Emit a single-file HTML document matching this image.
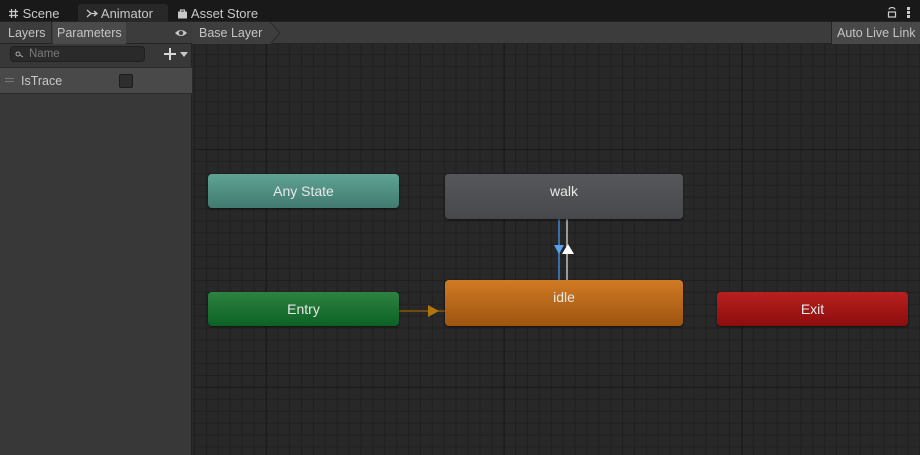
<!DOCTYPE html>
<html><head><meta charset="utf-8"><style>
*{margin:0;padding:0;box-sizing:border-box}
body{width:920px;height:455px;overflow:hidden;background:#282828;font-family:"Liberation Sans",sans-serif;font-size:12px;color:#c4c4c4;position:relative}
.a{position:absolute}
.tabs{left:0;top:0;width:920px;height:22px;background:#191919;border-bottom:1px solid #232323}
.tab{top:5px;height:18px;line-height:18px;font-size:13px;color:#c8c8c8}
.tool{left:0;top:22px;width:920px;height:22px;background:#3c3c3c;border-bottom:1px solid #232323}
.left{left:0;top:44px;width:192px;height:411px;background:#383838;border-right:1px solid #232323}
.graph{left:193px;top:44px;width:727px;height:411px;background-color:#282828;
background-image:
linear-gradient(90deg,#1b1b1b 0 1px,transparent 1px),
linear-gradient(180deg,#1b1b1b 0 1px,transparent 1px),
linear-gradient(90deg,#202020 0 1px,transparent 1px),
linear-gradient(180deg,#202020 0 1px,transparent 1px);
background-size:237.9px 237.9px,237.9px 237.9px,11.895px 11.895px,11.895px 11.895px;
background-position:73px 0,0 105px,1px 0,0 10px}
.node{position:absolute;border-radius:4px;text-align:center;color:#e8e8e8;font-size:14px;box-shadow:0 1px 2px rgba(0,0,0,.6)}
</style></head><body>
<div class="a tabs">
 <div class="a" style="left:78px;top:4px;width:90px;height:18px;background:#282828;border-radius:3px 3px 0 0"></div>
 <div class="a tab" style="left:8px"><svg width="11" height="11" style="vertical-align:-1px" viewBox="0 0 11 11"><path d="M3.5 1v9M7.5 1v9M1 3.5h9M1 7.5h9" stroke="#c8c8c8" stroke-width="1.3" fill="none"/></svg> Scene</div>
 <div class="a tab" style="left:86px"><svg width="12" height="11" style="vertical-align:-1px" viewBox="0 0 12 11"><path d="M1 2l4 3.5L1 9M5 5.5h6M8 3l3 2.5L8 8" stroke="#c8c8c8" stroke-width="1.3" fill="none"/></svg> Animator</div>
 <div class="a tab" style="left:177px"><svg width="11" height="11" style="vertical-align:-1px" viewBox="0 0 11 11"><rect x="1" y="3.5" width="9" height="7" fill="#c8c8c8"/><path d="M3.5 4V2h4v2" stroke="#c8c8c8" stroke-width="1.2" fill="none"/></svg> Asset Store</div>
 <svg class="a" style="left:887px;top:7px" width="10" height="11" viewBox="0 0 10 11"><path d="M2 2.5a3 2 0 0 1 6 0" stroke="#ccc" stroke-width="1.2" fill="none"/><rect x="1.5" y="5" width="7" height="5" stroke="#ccc" stroke-width="1.2" fill="none"/></svg>
 <div class="a" style="left:907px;top:7px;width:3px;height:3px;background:#ccc;box-shadow:0 4px #ccc,0 8px #ccc"></div>
</div>
<div class="a tool">
 <div class="a" style="left:0;top:0;width:52px;height:22px;line-height:23px;padding-left:8px;font-size:12.5px;border-right:1px solid #2a2a2a">Layers</div>
 <div class="a" style="left:53px;top:0;width:73px;height:22px;line-height:23px;padding-left:4px;background:#4a4a4a;font-size:12.5px">Parameters</div>
 <svg class="a" style="left:174px;top:6px" width="14" height="10" viewBox="0 0 14 10"><path d="M1 5Q7-1 13 5Q7 11 1 5z" fill="#c8c8c8"/><circle cx="7" cy="5" r="2.2" fill="#3c3c3c"/></svg>
 <div class="a" style="left:192px;top:0;width:80px;height:22px;line-height:23px;padding-left:7px;background:#3e3e3e;font-size:12.5px">Base Layer</div>
 <svg class="a" style="left:270px;top:0" width="12" height="22"><path d="M0 0L10 11L0 22" stroke="#2a2a2a" fill="#3e3e3e"/></svg>
 <div class="a" style="left:831px;top:0;width:89px;height:22px;line-height:23px;padding-left:5px;background:#484848;border-left:1px solid #262626;font-size:12.5px">Auto Live Link</div>
</div>
<div class="a left">
 <div class="a" style="left:10px;top:2px;width:135px;height:16px;background:#2a2a2a;border:1px solid #202020;border-radius:4px;color:#7a7a7a;font-size:11.5px;line-height:15px;padding-left:18px">Name</div>
 <svg class="a" style="left:15px;top:7px" width="9" height="7"><circle cx="3" cy="3" r="2" stroke="#aaa" fill="none"/><path d="M5 4l3 2" stroke="#aaa"/></svg>
 <div class="a" style="left:164px;top:9px;width:12px;height:2px;background:#d8d8d8"></div>
 <div class="a" style="left:169px;top:4px;width:2px;height:12px;background:#d8d8d8"></div>
 <div class="a" style="left:180px;top:8px;border:4px solid transparent;border-top:5px solid #c8c8c8;border-bottom:0"></div>
 <div class="a" style="left:0;top:23px;width:192px;height:27px;background:#494949;border-bottom:1px solid #2a2a2a;border-top:1px solid #2c2c2c"></div>
 <div class="a" style="left:5px;top:34px;width:9px;height:1px;background:#777;box-shadow:0 3px #777"></div>
 <div class="a" style="left:21px;top:30px;font-size:12.5px;color:#c8c8c8">IsTrace</div>
 <div class="a" style="left:119px;top:30px;width:14px;height:14px;background:#2e2e2e;border:1px solid #1c1c1c;border-radius:2px"></div>
</div>
<div class="a graph"></div>
<div class="a" style="left:558px;top:219px;width:2px;height:61px;background:#3b6ea8"></div>
<div class="a" style="left:566px;top:219px;width:2px;height:61px;background:#9a9a9a"></div>
<div class="a" style="left:554px;top:245px;border:5px solid transparent;border-top:9px solid #5aa0ee;border-bottom:0"></div>
<div class="a" style="left:562px;top:244px;border:6px solid transparent;border-bottom:10px solid #fff;border-top:0"></div>
<div class="a" style="left:399px;top:310px;width:46px;height:2px;background:#6e4a0e"></div>
<div class="a" style="left:428px;top:305px;border:6px solid transparent;border-left:11px solid #b07410;border-right:0"></div>
<div class="node" style="left:208px;top:174px;width:191px;height:34px;line-height:34px;background:linear-gradient(#5fa394,#417a70)">Any State</div>
<div class="node" style="left:445px;top:174px;width:238px;height:45px;line-height:35px;background:linear-gradient(#55575a,#46484b)">walk</div>
<div class="node" style="left:445px;top:280px;width:238px;height:46px;line-height:35px;background:linear-gradient(#d07a24,#9e5510)">idle</div>
<div class="node" style="left:208px;top:292px;width:191px;height:34px;line-height:34px;background:linear-gradient(#2e8242,#0b6224)">Entry</div>
<div class="node" style="left:717px;top:292px;width:191px;height:34px;line-height:34px;background:linear-gradient(#b8201e,#8c0d0d)">Exit</div>
</body></html>
